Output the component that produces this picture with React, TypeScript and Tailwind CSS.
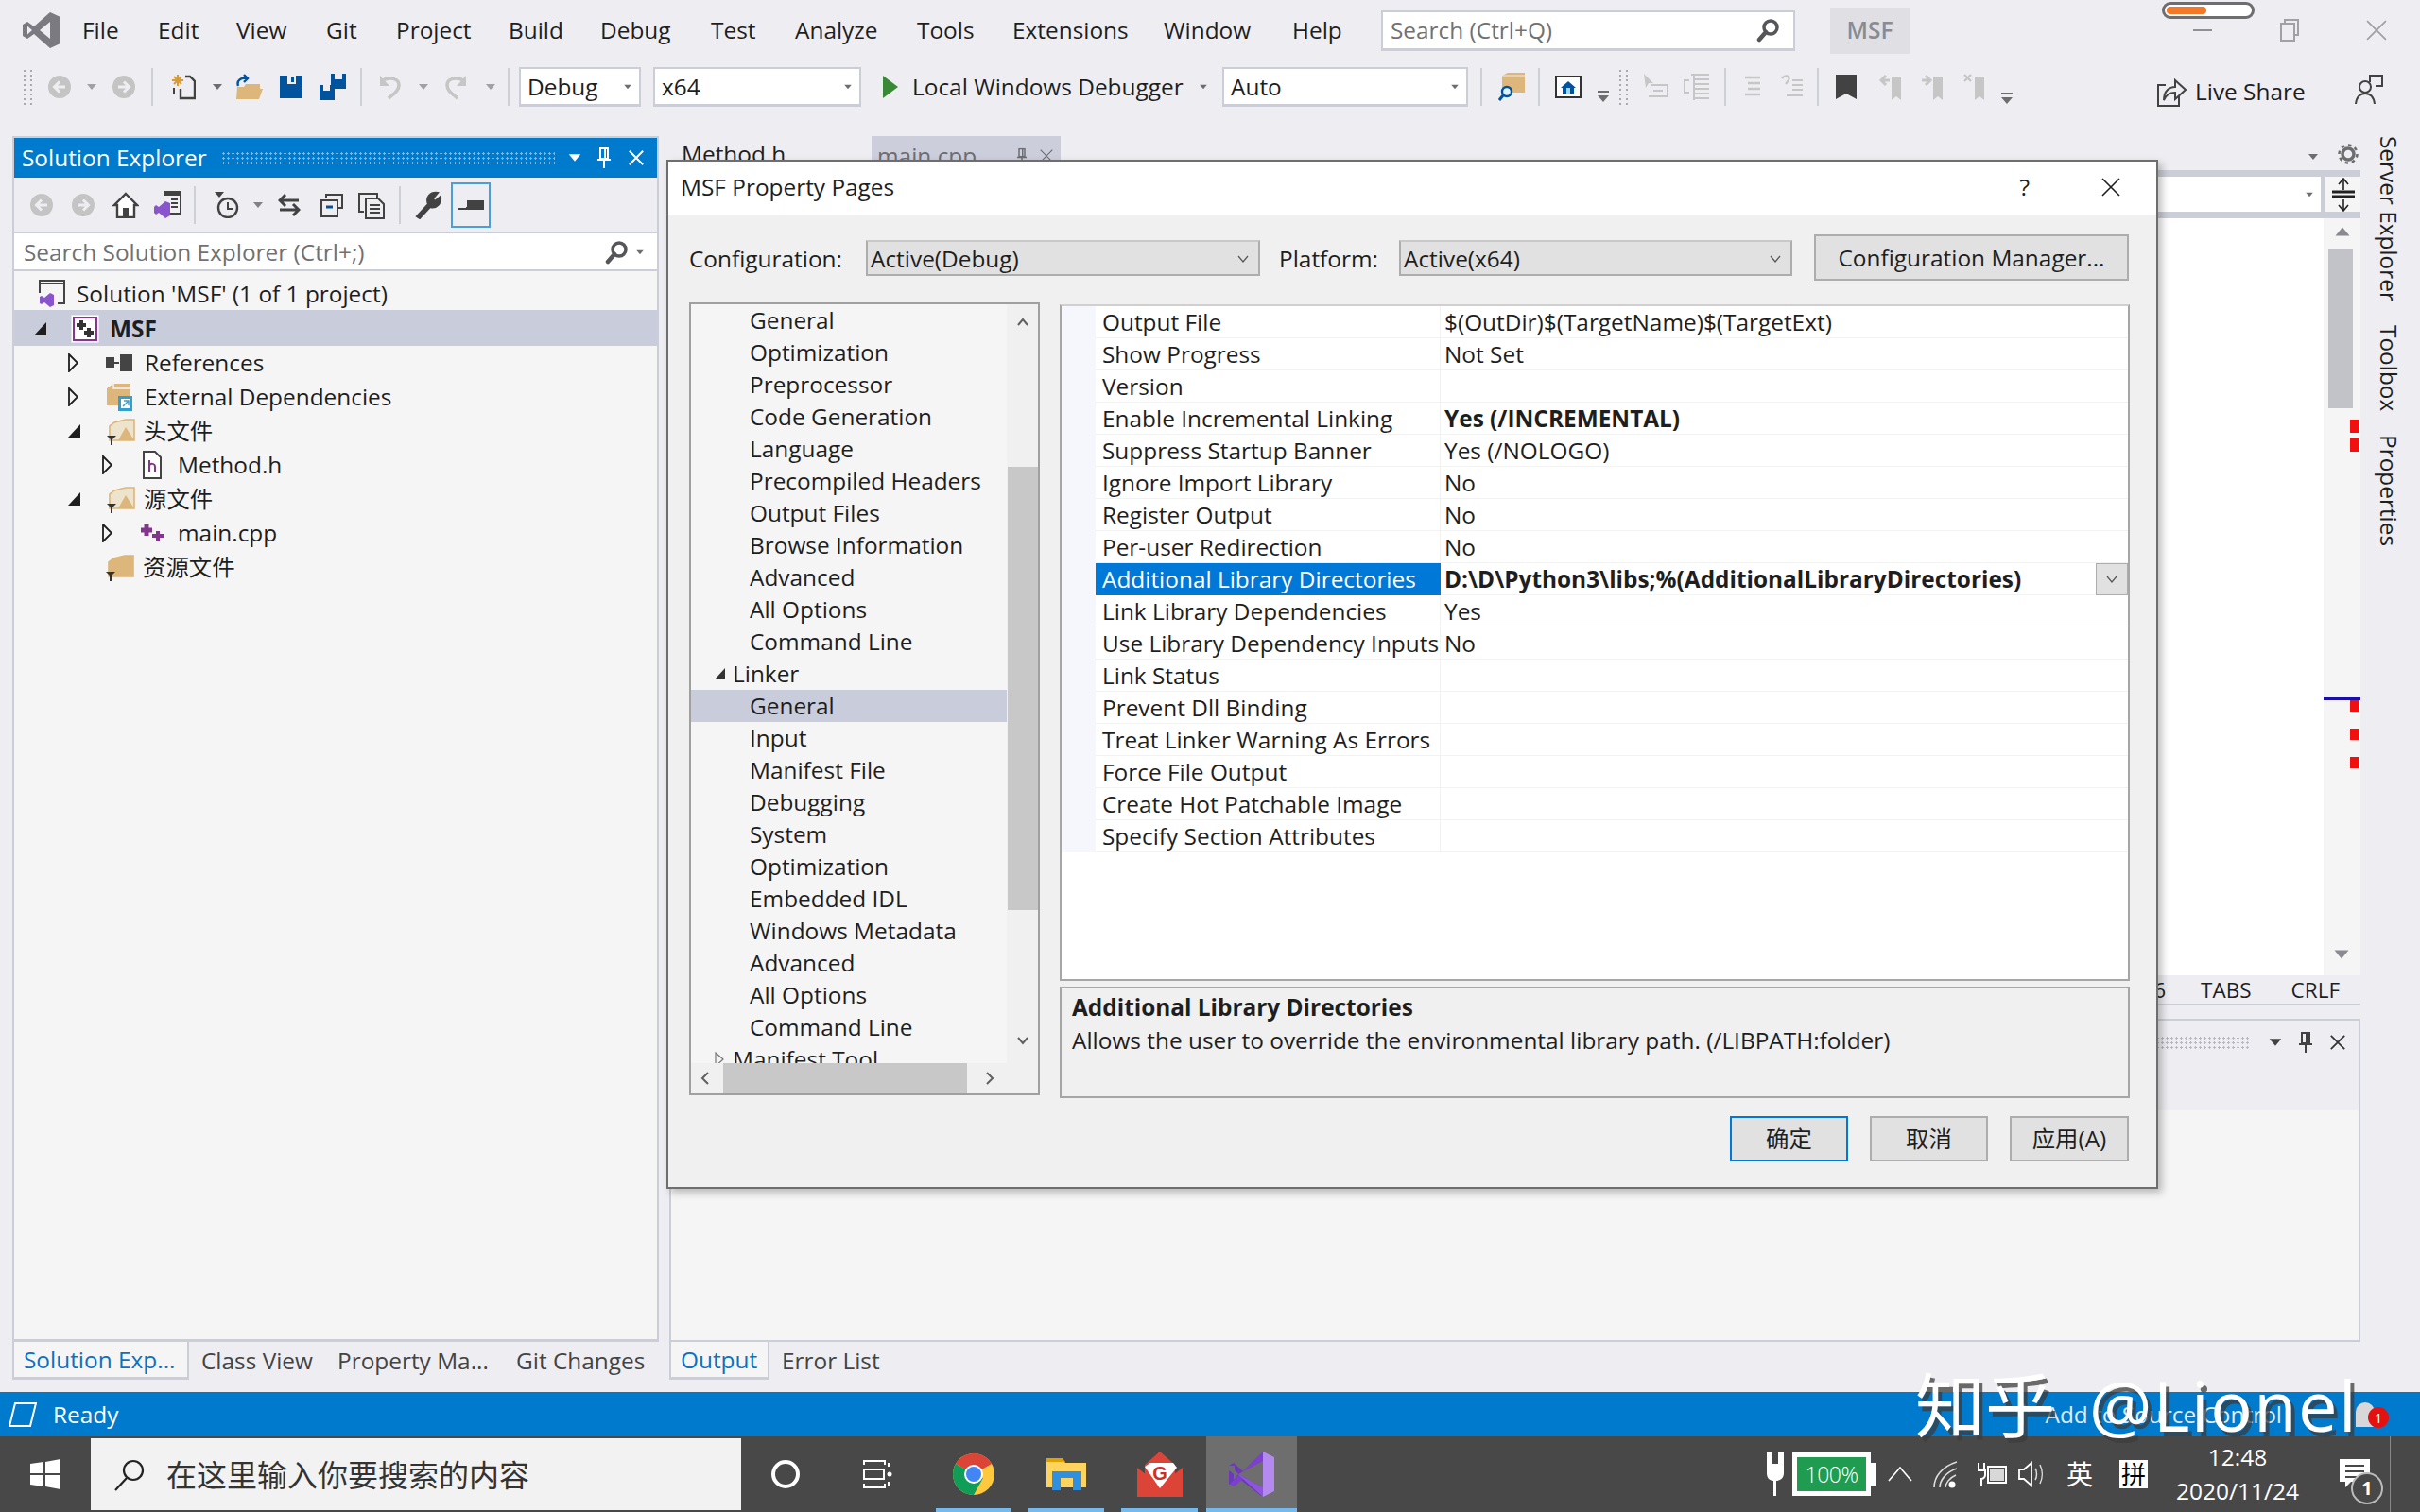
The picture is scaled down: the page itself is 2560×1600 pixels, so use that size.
import React from "react";

const ink = "#424242";
const blue = "#00539c";

function Drop({ c = "#717171", cls = "" }: { c?: string; cls?: string }) {
  return (
    <svg width="12" height="8" viewBox="0 0 12 8" className={cls}>
      <polygon points="1,1 11,1 6,7" fill={c} />
    </svg>
  );
}
function Sep({ cls = "" }: { cls?: string }) {
  return <div className={"h-[40px] w-[2px] bg-[#cfcfd6] " + cls} />;
}
function Grip({ cls = "" }: { cls?: string }) {
  return (
    <svg width="11" height="38" viewBox="0 0 11 38" className={cls}>
      {[1, 6, 11, 16, 21, 26, 31, 36].map((y) => (
        <g key={y} fill="#a9a9b0">
          <rect x="1" y={y} width="2" height="2" />
          <rect x="8" y={y} width="2" height="2" />
        </g>
      ))}
    </svg>
  );
}
function NavCircle({ right = false, cls = "" }: { right?: boolean; cls?: string }) {
  return (
    <svg width="24" height="24" viewBox="0 0 24 24" className={cls}>
      <circle cx="12" cy="12" r="12" fill="#c4c4c4" />
      <path
        d={right ? "M6 12H17M12 6.5L17.5 12L12 17.5" : "M18 12H7M12 6.5L6.5 12L12 17.5"}
        stroke="#eeeef2"
        strokeWidth="3"
        fill="none"
      />
    </svg>
  );
}
function VsLogo({ c = "#7a7a80", w = 42, h = 40 }: { c?: string; w?: number; h?: number }) {
  return (
    <svg width={w} height={h} viewBox="0 0 42 40">
      <path
        fillRule="evenodd"
        d="M30 1L41 6V34L30 39L13 24L6 29L1 26V14L6 11L13 16ZM30 11L19 20L30 29ZM6 15.5V24.5L11 20Z"
        fill={c}
      />
    </svg>
  );
}
function Magnifier({ c = "#424242", s = 26, cls = "" }: { c?: string; s?: number; cls?: string }) {
  return (
    <svg width={s} height={s} viewBox="0 0 26 26" className={cls}>
      <circle cx="16" cy="10" r="7" stroke={c} strokeWidth="3.5" fill="none" />
      <path d="M11 15L4 23" stroke={c} strokeWidth="4.5" strokeLinecap="round" />
    </svg>
  );
}
function Chev({ dir, cls = "" }: { dir: "up" | "down" | "left" | "right"; cls?: string }) {
  const d = {
    up: "M2 9L7 3L12 9",
    down: "M2 3L7 9L12 3",
    left: "M9 1L3 7L9 13",
    right: "M4 1L10 7L4 13",
  }[dir];
  return (
    <svg width="14" height="14" viewBox="0 0 14 14" className={cls}>
      <path d={d} stroke="#606060" strokeWidth="2" fill="none" />
    </svg>
  );
}
function ThinChev({ cls = "" }: { cls?: string }) {
  return (
    <svg width="12" height="8" viewBox="0 0 12 8" className={cls}>
      <path d="M1 1L6 7L11 1" stroke="#555" strokeWidth="1.2" fill="none" />
    </svg>
  );
}
function Cross({ c = "#1e1e1e", s = 20, w = 1.6, cls = "" }: { c?: string; s?: number; w?: number; cls?: string }) {
  return (
    <svg width={s} height={s} viewBox="0 0 20 20" className={cls}>
      <path d="M1 1L19 19M19 1L1 19" stroke={c} strokeWidth={w} />
    </svg>
  );
}
function Pin({ c = "#fff", cls = "" }: { c?: string; cls?: string }) {
  return (
    <svg width="14" height="22" viewBox="0 0 14 22" className={cls}>
      <path d="M3 1H11V12H3ZM8 2V11M0 13H14M7 13V22" stroke={c} strokeWidth="2" fill="none" />
    </svg>
  );
}

function NewIcon() {
  return (
    <svg width="26" height="28" viewBox="0 0 26 28" className="ml-[19px]">
      <path d="M7 1V13M1 7H13M3 3L11 11M11 3L3 11" stroke="#d89b33" strokeWidth="2" />
      <path d="M15 3H20L25 8V26H10V16" stroke={ink} strokeWidth="2.4" fill="none" />
      <path d="M3 15V22" stroke={ink} strokeWidth="2" />
    </svg>
  );
}
function OpenIcon() {
  return (
    <svg width="29" height="28" viewBox="0 0 29 28" className="ml-[13px]">
      <path d="M2 14H9L11 11H26V16H29L25 27H1Z" fill="#dcb67a" />
      <path d="M3 13C1 7 6 4 12 5M9 1L13 5L9 9" stroke={blue} strokeWidth="2.4" fill="none" />
    </svg>
  );
}
function SaveIcon() {
  return (
    <svg width="24" height="24" viewBox="0 0 24 24" className="ml-[18px]">
      <path d="M0 0H24V24H0Z" fill={blue} />
      <path d="M8 0H17V9H8Z" fill="#eeeef2" />
      <rect x="12" y="1" width="3" height="6" fill={blue} />
    </svg>
  );
}
function SaveAllIcon() {
  return (
    <svg width="28" height="28" viewBox="0 0 28 28" className="ml-[18px]">
      <path d="M12 0H28V16H12Z" fill={blue} />
      <rect x="16" y="0" width="8" height="6" fill="#eeeef2" />
      <path d="M0 12H16V28H0Z" fill={blue} />
      <rect x="4" y="12" width="7" height="6" fill="#eeeef2" />
    </svg>
  );
}
function Undo({ flip = false, cls = "" }: { flip?: boolean; cls?: string }) {
  return (
    <svg width="25" height="28" viewBox="0 0 25 28" className={cls + (flip ? " -scale-x-100" : "")}>
      <path d="M2 2V13H12Z" fill="#c6c6c6" />
      <path d="M5 7C12 3 22 5 22 12C22 18 17 21 11 26" stroke="#c6c6c6" strokeWidth="3.6" fill="none" />
    </svg>
  );
}
function FolderSearch() {
  return (
    <svg width="28" height="32" viewBox="0 0 28 32" className="ml-[17px]">
      <path d="M4 4L10 1H28V22H4Z" fill="#dcb67a" />
      <path d="M4 4H28" stroke="#eeeef2" strokeWidth="1" />
      <circle cx="9" cy="21" r="5" fill="#dff1fb" stroke={blue} strokeWidth="2.4" />
      <path d="M5 25L1 30" stroke={blue} strokeWidth="3" />
    </svg>
  );
}
function HomeBox() {
  return (
    <svg width="28" height="24" viewBox="0 0 28 24" className="ml-[16px]">
      <rect x="1" y="1" width="26" height="22" fill="#fff" stroke="#333" strokeWidth="2" />
      <path d="M14 6L22 13H20V19H8V13H6Z" fill={blue} />
      <rect x="12" y="13" width="4" height="6" fill="#9fd6f2" />
    </svg>
  );
}
function DropLines({ cls = "" }: { cls?: string }) {
  return (
    <svg width="12" height="12" viewBox="0 0 12 12" className={cls}>
      <rect x="0" y="0" width="12" height="2" fill="#6d6d70" />
      <polygon points="0,5 12,5 6,12" fill="#6d6d70" />
    </svg>
  );
}
function CursorList() {
  return (
    <svg width="27" height="28" viewBox="0 0 27 28" className="ml-[15px]">
      <path d="M1 0L11 10H6L3 15Z" fill="#c6c6c6" />
      <path d="M9 12H26V24H6" stroke="#c6c6c6" strokeWidth="2" fill="none" />
      <path d="M11 18H21" stroke="#c6c6c6" strokeWidth="2" />
    </svg>
  );
}
function TextLines() {
  return (
    <svg width="28" height="28" viewBox="0 0 28 28" className="ml-[16px]">
      <path d="M8 1H27M12 6H27M12 11H27M12 16H27M12 21H27M12 26H27M11 1V28M6 7H1V20H6" stroke="#c6c6c6" strokeWidth="2" fill="none" />
    </svg>
  );
}
function Indent1() {
  return (
    <svg width="20" height="24" viewBox="0 0 20 24" className="ml-[18px]">
      <path d="M2 2H18M5 8H18M5 14H18M2 20H18" stroke="#c6c6c6" strokeWidth="2.4" />
    </svg>
  );
}
function Indent2() {
  return (
    <svg width="23" height="26" viewBox="0 0 23 26" className="ml-[20px]">
      <path d="M1 4C5 -1 10 2 8 6L5 10M12 6H23M12 11H23M12 16H23M6 22H23" stroke="#c6c6c6" strokeWidth="2.2" fill="none" />
    </svg>
  );
}
function Bookmark() {
  return (
    <svg width="22" height="26" viewBox="0 0 22 26" className="ml-[18px]">
      <path d="M0 0H22V26L11 20L0 26Z" fill="#424242" />
    </svg>
  );
}
function BookmarkNav({ kind, cls = "" }: { kind: "prev" | "next" | "clear"; cls?: string }) {
  return (
    <svg width="24" height="28" viewBox="0 0 24 28" className={cls}>
      <path d="M13 3H23V28L18 24L13 28Z" fill="#c6c6c6" />
      {kind === "prev" && <path d="M11 7H4M7 2L2 7L7 12" stroke="#c6c6c6" strokeWidth="3" fill="none" />}
      {kind === "next" && <path d="M1 7H9M5 2L10 7L5 12" stroke="#c6c6c6" strokeWidth="3" fill="none" />}
      {kind === "clear" && <path d="M2 1L9 8M9 1L2 8" stroke="#c6c6c6" strokeWidth="2.4" />}
    </svg>
  );
}

function Combo({ cls, text, arrowCls }: { cls: string; text: string; arrowCls?: string }) {
  return (
    <div className={"flex h-[42px] items-center justify-between border-2 border-b-[3px] border-[#ccced7] bg-white " + cls}>
      <span>{text}</span>
      <Drop c="#6d6d70" cls={arrowCls ?? "mr-[6px] scale-75"} />
    </div>
  );
}

function MenuBar() {
  const items: [string, string][] = [
    ["File", "w-[79px]"],
    ["Edit", "w-[83px]"],
    ["View", "w-[95px]"],
    ["Git", "w-[74px]"],
    ["Project", "w-[119px]"],
    ["Build", "w-[97px]"],
    ["Debug", "w-[117px]"],
    ["Test", "w-[89px]"],
    ["Analyze", "w-[129px]"],
    ["Tools", "w-[101px]"],
    ["Extensions", "w-[160px]"],
    ["Window", "w-[136px]"],
    ["Help", "w-[94px]"],
  ];
  return (
    <div className="flex h-[64px] shrink-0 items-center pl-[23px]">
      <div className="mr-[22px] flex">
        <VsLogo />
      </div>
      {items.map(([t, w], i) => (
        <span key={t} className={i === 0 ? "w-[80px]" : w}>
          {t}
        </span>
      ))}
      <div className="flex h-[43px] w-[438px] items-center justify-between border-2 border-b-[3px] border-[#ccced7] bg-white pl-[8px] pr-[14px] text-[#717171]">
        <span>Search (Ctrl+Q)</span>
        <Magnifier c="#55555a" />
      </div>
      <div className="ml-[37px] flex h-[49px] w-[84px] items-center justify-center bg-[#dfdfe4] font-semibold text-[#8b8b8f]">MSF</div>
      <div className="ml-[300px] h-[2px] w-[20px] bg-[#8f8f94]" />
      <svg width="20" height="24" viewBox="0 0 20 24" className="ml-[72px]">
        <path d="M5 5V1H19V17H15M1 5H15V23H1Z" stroke="#a0a0a5" strokeWidth="2" fill="none" />
      </svg>
      <Cross c="#a0a0a5" s={22} cls="ml-[71px]" />
    </div>
  );
}

function ToolBar() {
  return (
    <div className="flex h-[54px] shrink-0 items-center pl-[24px] pt-[2px]">
      <Grip />
      <NavCircle cls="ml-[16px]" />
      <Drop c="#a0a0a5" cls="ml-[16px]" />
      <NavCircle right cls="ml-[16px]" />
      <Sep cls="ml-[17px]" />
      <NewIcon />
      <Drop c="#6d6d70" cls="ml-[17px]" />
      <OpenIcon />
      <SaveIcon />
      <SaveAllIcon />
      <Sep cls="ml-[15px]" />
      <Undo cls="ml-[17px]" />
      <Drop c="#a0a0a5" cls="ml-[17px]" />
      <Undo flip cls="ml-[16px]" />
      <Drop c="#a0a0a5" cls="ml-[18px]" />
      <Sep cls="ml-[12px]" />
      <Combo cls="ml-[10px] w-[129px] pl-[7px]" text="Debug" />
      <Combo cls="ml-[13px] w-[220px] pl-[7px]" text="x64" />
      <svg width="18" height="26" viewBox="0 0 18 26" className="ml-[22px]">
        <polygon points="1,1 17,13 1,25" fill="#388a34" />
      </svg>
      <span className="ml-[14px] w-[292px] whitespace-nowrap">Local Windows Debugger</span>
      <Drop c="#6d6d70" cls="ml-[10px] scale-75" />
      <Combo cls="ml-[14px] w-[260px] pl-[7px]" text="Auto" />
      <Sep cls="ml-[13px]" />
      <FolderSearch />
      <Sep cls="ml-[14px]" />
      <HomeBox />
      <DropLines cls="ml-[17px] mt-[20px]" />
      <Grip cls="ml-[10px]" />
      <CursorList />
      <TextLines />
      <Sep cls="ml-[15px]" />
      <Indent1 />
      <Indent2 />
      <Sep cls="ml-[15px]" />
      <Bookmark />
      <BookmarkNav kind="prev" cls="ml-[24px]" />
      <BookmarkNav kind="next" cls="ml-[20px]" />
      <BookmarkNav kind="clear" cls="ml-[20px]" />
      <DropLines cls="ml-[17px] mt-[24px]" />
      <svg width="32" height="34" viewBox="0 0 32 34" className="ml-[152px] mt-[10px]">
        <path d="M10 10H2V32H24V22" stroke={ink} strokeWidth="2" fill="none" />
        <path d="M8 26C8 16 14 12 20 12V5L31 15L20 25V18C14 18 11 20 8 26Z" stroke={ink} strokeWidth="2" fill="none" />
      </svg>
      <span className="ml-[9px] mt-[10px] w-[120px] whitespace-nowrap">Live Share</span>
      <svg width="30" height="32" viewBox="0 0 30 32" className="ml-[49px] mt-[6px]">
        <circle cx="11" cy="13" r="6" stroke={ink} strokeWidth="2" fill="none" />
        <path d="M1 31C2 23 6 20 11 20C16 20 20 23 21 31M16 8V1H29V12H22" stroke={ink} strokeWidth="2" fill="none" />
      </svg>
    </div>
  );
}

function SolutionToolbar() {
  return (
    <div className="flex h-[57px] shrink-0 items-center pl-[17px]">
      <NavCircle />
      <NavCircle right cls="ml-[20px]" />
      <svg width="28" height="28" viewBox="0 0 28 28" className="ml-[19px]">
        <path d="M14 2L26 14H23V27H5V14H2Z" stroke={ink} strokeWidth="2.4" fill="#fff" />
        <rect x="11" y="17" width="6" height="10" fill={ink} />
      </svg>
      <svg width="30" height="30" viewBox="0 0 30 30" className="ml-[15px]">
        <path d="M11 1H29V24H17" fill="#f0f0f4" stroke={ink} strokeWidth="2" />
        <rect x="11" y="1" width="18" height="4" fill={ink} />
        <path d="M19 9H26M19 13H26M19 17H26" stroke={ink} strokeWidth="2" />
        <path d="M13 11L18 13V26L13 29L6 23L3 25L1 23V17L3 15L6 17Z" fill="#8a55cc" />
      </svg>
      <Sep cls="ml-[13px] h-[38px]" />
      <svg width="26" height="28" viewBox="0 0 26 28" className="ml-[20px]">
        <polygon points="0,0 10,0 5,6" fill={ink} />
        <circle cx="14" cy="17" r="10" stroke={ink} strokeWidth="2.4" fill="none" />
        <path d="M14 11V18H20" stroke={ink} strokeWidth="2" fill="none" />
      </svg>
      <Drop c="#818186" cls="ml-[14px]" />
      <svg width="24" height="26" viewBox="0 0 24 26" className="ml-[15px]">
        <path d="M2 8H22M8 2L2 8L8 14M22 18H2M16 12L22 18L16 24" stroke={ink} strokeWidth="3" fill="none" />
      </svg>
      <svg width="24" height="26" viewBox="0 0 24 26" className="ml-[21px]">
        <path d="M6 6V2H23V16H19" stroke={ink} strokeWidth="2" fill="none" />
        <rect x="1" y="8" width="17" height="17" fill="#eeeef2" stroke={ink} strokeWidth="2" />
        <path d="M6 15H13" stroke={blue} strokeWidth="3" />
      </svg>
      <svg width="28" height="30" viewBox="0 0 28 30" className="ml-[16px]">
        <path d="M6 22H1V3H20V7" stroke={ink} strokeWidth="2" fill="none" />
        <path d="M8 8H21L27 14V29H8Z" fill="#eeeef2" stroke={ink} strokeWidth="2" />
        <path d="M12 15H23M12 19H23M12 23H23" stroke={ink} strokeWidth="2" />
      </svg>
      <Sep cls="ml-[15px] h-[38px]" />
      <svg width="30" height="30" viewBox="0 0 30 30" className="ml-[14px]">
        <path d="M3 27L15 14C12 7 17 1 25 2L20 8L22 11L28 6C29 14 23 19 17 17L6 29Z" fill={ink} stroke={ink} strokeWidth="2" />
      </svg>
      <div className="ml-[9px] flex h-[48px] w-[42px] items-center justify-center border-2 border-[#4a9fd8]">
        <svg width="28" height="10" viewBox="0 0 28 10">
          <path d="M0 8H9V7H10V0H28V10H0Z" fill={ink} />
        </svg>
      </div>
    </div>
  );
}

function TreeRow({
  cls,
  arrow,
  arrowCls,
  icon,
  text,
  textCls,
}: {
  cls?: string;
  arrow?: "open" | "closed";
  arrowCls?: string;
  icon?: React.ReactNode;
  text: string;
  textCls: string;
}) {
  return (
    <div className={"flex h-[36px] shrink-0 items-center " + (cls ?? "")}>
      {arrow === "open" && (
        <svg width="14" height="14" viewBox="0 0 14 14" className={arrowCls}>
          <polygon points="13,0 13,14 0,14" fill="#1e1e1e" />
        </svg>
      )}
      {arrow === "closed" && (
        <svg width="11" height="20" viewBox="0 0 11 20" className={arrowCls}>
          <polygon points="1,1 10,10 1,19" fill="none" stroke="#1e1e1e" strokeWidth="1.8" />
        </svg>
      )}
      {icon}
      <span className={textCls}>{text}</span>
    </div>
  );
}

const FilterFolder = ({ solid = false }: { solid?: boolean }) => (
  <svg width="30" height="30" viewBox="0 0 30 30">
    <path d="M8 6L20 3H29V25H3V10Z" fill={solid ? "#dcb67a" : "#eee3cd"} stroke="#dcb67a" strokeWidth="1.6" />
    {!solid && <path d="M12 25L20 11L29 25Z" fill="#dcb67a" />}
    <polygon points="0,20 10,20 5,25" fill="#333" />
    <rect x="4" y="24" width="2" height="6" fill="#333" />
  </svg>
);

function SolutionPanel() {
  return (
    <div className="flex w-[684px] shrink-0 flex-col border-2 border-b-[3px] border-[#ccced7] bg-[#eeeef2]">
      <div className="flex h-[42px] shrink-0 items-center bg-[#007acc] pl-[8px] pr-[14px] text-white">
        <span>Solution Explorer</span>
        <div className="mx-[15px] h-[14px] flex-1 bg-[radial-gradient(#7ab8e4_1px,transparent_1.2px)] bg-[length:5px_5px]" />
        <Drop c="#fff" cls="scale-125" />
        <Pin cls="ml-[18px]" />
        <Cross c="#fff" s={16} w={2.4} cls="ml-[19px]" />
      </div>
      <SolutionToolbar />
      <div className="flex h-[42px] shrink-0 items-center justify-between border-2 border-l-0 border-r-0 border-[#ccced7] bg-white pl-[10px] pr-[12px] pt-[2px] text-[#717171]">
        <span>Search Solution Explorer (Ctrl+;)</span>
        <div className="flex items-center">
          <Magnifier c="#55555a" />
          <Drop c="#6d6d70" cls="ml-[6px] scale-75" />
        </div>
      </div>
      <div className="flex flex-1 flex-col bg-[#f5f5f5] pt-[5px]">
        <TreeRow
          cls="h-[35px] pl-[26px] pt-[2px]"
          icon={
            <svg width="28" height="30" viewBox="0 0 28 30" className="mr-[12px]">
              <path d="M1 14V1H27V4M1 4H27M27 4V25H20" stroke="#444" strokeWidth="2" fill="none" />
              <path d="M12 14L16 16V27L12 29L6 24L3 26L1 25V18L3 17L6 19Z" fill="#8a55cc" />
            </svg>
          }
          text="Solution 'MSF' (1 of 1 project)"
          textCls=""
        />
        <TreeRow
          cls="h-[38px] bg-[#c9ccdb] pl-[21px] pt-[2px]"
          arrow="open"
          arrowCls="mr-[25px]"
          icon={
            <svg width="30" height="30" viewBox="0 0 30 30" className="mr-[11px]">
              <rect x="1" y="1" width="28" height="28" fill="#fff" stroke="#fff" />
              <rect x="3" y="3" width="24" height="24" fill="#fff" stroke="#84358d" strokeWidth="2" />
              <path d="M11 6V16M6 11H16" stroke="#333" strokeWidth="4" />
              <path d="M19 14V24M14 19H24" stroke="#333" strokeWidth="4" />
            </svg>
          }
          text="MSF"
          textCls="font-bold"
        />
        <TreeRow
          cls="pl-[57px]"
          arrow="closed"
          arrowCls="mr-[29px]"
          icon={
            <svg width="28" height="18" viewBox="0 0 28 18" className="mr-[13px]">
              <rect x="0" y="3" width="9" height="11" fill="#444" />
              <rect x="9" y="8" width="5" height="2" fill="#444" />
              <rect x="15" y="0" width="13" height="18" fill="#444" />
            </svg>
          }
          text="References"
          textCls=""
        />
        <TreeRow
          cls="pl-[57px]"
          arrow="closed"
          arrowCls="mr-[29px]"
          icon={
            <svg width="28" height="30" viewBox="0 0 28 30" className="mr-[13px]">
              <path d="M1 6L8 1H26V24H1Z" fill="#dcb67a" />
              <path d="M8 1V6H26" stroke="#f5f5f5" strokeWidth="1.5" fill="none" />
              <rect x="13" y="14" width="15" height="16" fill="#2fa0d0" />
              <rect x="16" y="17" width="9" height="10" fill="#fff" />
              <path d="M18 25L23 20M19 19H24V24" stroke="#2fa0d0" strokeWidth="1.4" fill="none" />
            </svg>
          }
          text="External Dependencies"
          textCls=""
        />
        <TreeRow cls="pl-[57px]" arrow="open" arrowCls="mr-[27px]" icon={<div className="mr-[9px] flex"><FilterFolder /></div>} text="头文件" textCls="" />
        <TreeRow
          cls="pl-[93px]"
          arrow="closed"
          arrowCls="mr-[32px]"
          icon={
            <svg width="20" height="30" viewBox="0 0 20 30" className="mr-[17px]">
              <path d="M1 1H13L19 7V29H1Z" fill="#fff" stroke="#444" strokeWidth="2" />
              <path d="M7 10V22M7 16C8 13 13 13 13 17V22" stroke="#84358d" strokeWidth="2" fill="none" />
            </svg>
          }
          text="Method.h"
          textCls=""
        />
        <TreeRow cls="pl-[57px]" arrow="open" arrowCls="mr-[27px]" icon={<div className="mr-[9px] flex"><FilterFolder /></div>} text="源文件" textCls="" />
        <TreeRow
          cls="pl-[93px]"
          arrow="closed"
          arrowCls="mr-[30px]"
          icon={
            <svg width="24" height="20" viewBox="0 0 24 20" className="mr-[15px]">
              <path d="M6 1V13M0 7H12" stroke="#84358d" strokeWidth="5" />
              <path d="M18 8V19M12 13H24" stroke="#84358d" strokeWidth="4" />
            </svg>
          }
          text="main.cpp"
          textCls=""
        />
        <TreeRow cls="pl-[97px]" icon={<div className="mr-[9px] flex"><FilterFolder solid /></div>} text="资源文件" textCls="" />
      </div>
    </div>
  );
}

function DocPanel() {
  return (
    <div className="flex h-[920px] shrink-0 flex-col">
      <div className="flex h-[36px] shrink-0 items-start">
        <span className="ml-[13px] mt-[4px] w-[201px] whitespace-nowrap">Method.h</span>
        <div className="flex h-[36px] w-[200px] items-center justify-between bg-[#cccedb] pl-[6px] pr-[8px] pt-[6px] text-[#6d6d70]">
          <span>main.cpp</span>
          <div className="flex items-center gap-[12px]">
            <Pin c="#6d6d70" cls="scale-75" />
            <Cross c="#6d6d70" s={14} />
          </div>
        </div>
        <div className="flex-1" />
        <Drop c="#6d6d70" cls="mt-[18px]" />
        <svg width="22" height="22" viewBox="0 0 22 22" className="ml-[20px] mr-[2px] mt-[8px]">
          <circle cx="11" cy="11" r="6" fill="none" stroke="#6d6d70" strokeWidth="3.5" />
          <circle cx="11" cy="11" r="9.5" fill="none" stroke="#6d6d70" strokeWidth="2.5" strokeDasharray="3.5 3.9" />
        </svg>
      </div>
      <div className="flex h-[51px] shrink-0 items-stretch border-y-[7px] border-y-[#ccced7] bg-[#ccced7]">
        <div className="flex flex-1 items-center justify-end bg-white pr-[6px]">
          <Drop c="#6d6d70" cls="scale-75" />
        </div>
        <div className="ml-[5px] flex w-[37px] items-center justify-center bg-[#f5f5f5]">
          <svg width="24" height="36" viewBox="0 0 24 36">
            <path d="M12 1V13M12 23V35M7 7L12 1L17 7M7 29L12 35L17 29" stroke="#222" strokeWidth="1.6" fill="none" />
            <path d="M0 15H24M0 20H24" stroke="#222" strokeWidth="3" />
          </svg>
        </div>
      </div>
      <div className="flex min-h-0 flex-1">
        <div className="flex-1 bg-white" />
        <div className="relative flex w-[39px] flex-col items-center bg-[#f5f5f5] pt-[10px]">
          <Drop c="#8a8a90" cls="rotate-180 scale-150" />
          <div className="mr-[4px] mt-[15px] h-[168px] w-[26px] bg-[#c2c3c9]" />
          <div className="absolute right-[1px] top-[213px] h-[14px] w-[10px] bg-[#f01010]" />
          <div className="absolute right-[1px] top-[233px] h-[14px] w-[10px] bg-[#f01010]" />
          <div className="absolute left-0 right-0 top-[507px] h-[3px] bg-[#1a10a8]" />
          <div className="absolute right-[1px] top-[510px] h-[12px] w-[10px] bg-[#f01010]" />
          <div className="absolute right-[1px] top-[540px] h-[12px] w-[10px] bg-[#f01010]" />
          <div className="absolute right-[1px] top-[570px] h-[12px] w-[10px] bg-[#f01010]" />
          <Drop c="#8a8a90" cls="absolute bottom-[18px] left-[13px] scale-150" />
        </div>
      </div>
      <div className="flex h-[32px] shrink-0 items-center justify-end border-b-2 border-[#ccced7] pt-[2px] text-[22.5px]">
        <span className="mr-[37px]">Ch: 6</span>
        <span className="mr-[42px]">TABS</span>
        <span className="mr-[22px]">CRLF</span>
      </div>
    </div>
  );
}

function OutputPanel() {
  return (
    <div className="mt-[14px] flex min-h-0 flex-1 flex-col border-2 border-[#ccced7]">
      <div className="flex h-[46px] shrink-0 items-center justify-end pr-[14px]">
        <div className="mr-[22px] h-[14px] flex-1 bg-[radial-gradient(#b8b8c0_1px,transparent_1.2px)] bg-[length:5px_5px]" />
        <Drop c="#424242" cls="scale-125" />
        <Pin c="#424242" cls="ml-[19px]" />
        <Cross c="#333" s={16} w={2.2} cls="ml-[19px]" />
      </div>
      <div className="h-[49px] shrink-0" />
      <div className="flex-1 bg-[#f5f5f5]" />
    </div>
  );
}

function BottomTabs({ items }: { items: [string, string, boolean][] }) {
  return (
    <div className="flex h-[40px] shrink-0 items-center">
      {items.map(([t, c, active]) => (
        <div
          key={t}
          className={
            active
              ? "flex h-[40px] items-center whitespace-nowrap border-x-2 border-b-[3px] border-[#ccced7] border-t-0 bg-[#f5f5f5] text-[#0e70c0] " + c
              : "flex h-[40px] items-center whitespace-nowrap text-[#444] " + c
          }
        >
          {t}
        </div>
      ))}
    </div>
  );
}

const leftRows: [string, number][] = [
  ["General", 1],
  ["Optimization", 1],
  ["Preprocessor", 1],
  ["Code Generation", 1],
  ["Language", 1],
  ["Precompiled Headers", 1],
  ["Output Files", 1],
  ["Browse Information", 1],
  ["Advanced", 1],
  ["All Options", 1],
  ["Command Line", 1],
  ["Linker", 0],
  ["General", 2],
  ["Input", 1],
  ["Manifest File", 1],
  ["Debugging", 1],
  ["System", 1],
  ["Optimization", 1],
  ["Embedded IDL", 1],
  ["Windows Metadata", 1],
  ["Advanced", 1],
  ["All Options", 1],
  ["Command Line", 1],
  ["Manifest Tool", 3],
];

function PropTree() {
  return (
    <div className="flex h-[839px] w-[371px] shrink-0 flex-col border-2 border-[#a0a0a0] bg-[#f0f0f0]">
      <div className="flex h-[803px] shrink-0">
        <div className="w-[334px] shrink-0 overflow-hidden bg-[#f5f5f5]">
          {leftRows.map(([t, k], i) => {
            if (k === 0 || k === 3) {
              return (
                <div key={i} className="flex h-[34px] items-center pl-[25px]">
                  {k === 0 ? (
                    <svg width="12" height="12" viewBox="0 0 12 12" className="mr-[7px]">
                      <polygon points="11,0 11,12 0,12" fill="#333" />
                    </svg>
                  ) : (
                    <svg width="10" height="16" viewBox="0 0 10 16" className="mr-[9px]">
                      <polygon points="1,1 9,8 1,15" fill="none" stroke="#777" strokeWidth="1.2" />
                    </svg>
                  )}
                  {t}
                </div>
              );
            }
            return (
              <div key={i} className={k === 2 ? "flex h-[34px] items-center bg-[#c9ccdb] pl-[62px]" : "flex h-[34px] items-center pl-[62px]"}>
                {t}
              </div>
            );
          })}
        </div>
        <div className="flex w-[33px] flex-col items-center">
          <Chev dir="up" cls="mt-[13px]" />
          <div className="mt-[145px] h-[469px] w-[32px] bg-[#c8c8c8]" />
          <Chev dir="down" cls="mt-[132px]" />
        </div>
      </div>
      <div className="flex h-[32px] items-center">
        <Chev dir="left" cls="ml-[9px]" />
        <div className="ml-[11px] h-[32px] w-[258px] bg-[#c8c8c8]" />
        <Chev dir="right" cls="ml-[17px]" />
      </div>
    </div>
  );
}

const propRows: { l: string; v?: string; b?: boolean; sel?: boolean }[] = [
  { l: "Output File", v: "$(OutDir)$(TargetName)$(TargetExt)" },
  { l: "Show Progress", v: "Not Set" },
  { l: "Version" },
  { l: "Enable Incremental Linking", v: "Yes (/INCREMENTAL)", b: true },
  { l: "Suppress Startup Banner", v: "Yes (/NOLOGO)" },
  { l: "Ignore Import Library", v: "No" },
  { l: "Register Output", v: "No" },
  { l: "Per-user Redirection", v: "No" },
  { l: "Additional Library Directories", v: "D:\\D\\Python3\\libs;%(AdditionalLibraryDirectories)", b: true, sel: true },
  { l: "Link Library Dependencies", v: "Yes" },
  { l: "Use Library Dependency Inputs", v: "No" },
  { l: "Link Status" },
  { l: "Prevent Dll Binding" },
  { l: "Treat Linker Warning As Errors" },
  { l: "Force File Output" },
  { l: "Create Hot Patchable Image" },
  { l: "Specify Section Attributes" },
];

function PropGrid() {
  return (
    <div className="h-[716px] shrink-0 border-2 border-[#a6a6a6] border-t-[#d0d0d0] bg-white">
      {propRows.map((r) => (
        <div key={r.l} className="flex h-[34px] items-stretch">
          <div className="w-[36px] shrink-0 bg-[#f5f7fc]" />
          <div
            className={
              r.sel
                ? "flex w-[365px] shrink-0 items-center overflow-hidden whitespace-nowrap bg-[#0078d7] pl-[7px] text-white"
                : "flex w-[365px] shrink-0 items-center overflow-hidden whitespace-nowrap border-b border-r border-[#f2f2f2] pl-[7px]"
            }
          >
            {r.l}
          </div>
          <div className={r.b ? "flex flex-1 items-center whitespace-nowrap border-b border-[#f2f2f2] pl-[4px] font-bold" : "flex flex-1 items-center whitespace-nowrap border-b border-[#f2f2f2] pl-[4px]"}>
            {r.v}
          </div>
          {r.sel && (
            <div className="flex w-[34px] items-center justify-center border border-[#adadad] bg-[#e1e1e1]">
              <ThinChev />
            </div>
          )}
        </div>
      ))}
    </div>
  );
}

function Dialog() {
  return (
    <div className="absolute left-[705px] top-[169px] flex h-[1089px] w-[1578px] flex-col border-2 border-[#6e6e6e] bg-white shadow-[4px_4px_8px_rgba(0,0,0,0.25)]">
      <div className="flex h-[56px] shrink-0 items-center pb-[2px] pl-[13px]">
        <span className="flex-1">MSF Property Pages</span>
        <span className="mr-[76px]">?</span>
        <Cross s={20} cls="mr-[38px]" />
      </div>
      <div className="flex flex-1 flex-col bg-[#f0f0f0] pl-[22px] pr-[29px] pt-[21px]">
        <div className="flex h-[49px] shrink-0 items-center">
          <span className="w-[187px] whitespace-nowrap pt-[2px]">Configuration:</span>
          <div className="flex h-[38px] w-[417px] items-center justify-between border-2 border-[#adadad] border-t-[#c8c8c8] bg-[#e1e1e1] pl-[3px] pr-[10px] pt-[3px]">
            <span>Active(Debug)</span>
            <ThinChev />
          </div>
          <span className="ml-[20px] w-[127px] pt-[2px]">Platform:</span>
          <div className="flex h-[38px] w-[416px] items-center justify-between border-2 border-[#adadad] border-t-[#c8c8c8] bg-[#e1e1e1] pl-[3px] pr-[10px] pt-[3px]">
            <span>Active(x64)</span>
            <ThinChev />
          </div>
          <div className="ml-[23px] flex h-[49px] w-[333px] items-center justify-center whitespace-nowrap border-2 border-[#adadad] bg-[#e1e1e1]">Configuration Manager...</div>
        </div>
        <div className="mt-[23px] flex gap-[21px]">
          <PropTree />
          <div className="-mr-[1px] flex flex-1 flex-col pt-[2px]">
            <PropGrid />
            <div className="mt-[6px] h-[118px] border-2 border-[#a6a6a6] pl-[11px] pt-[5px]">
              <div className="h-[35px] font-bold">Additional Library Directories</div>
              <div>Allows the user to override the environmental library path. (/LIBPATH:folder)</div>
            </div>
          </div>
        </div>
        <div className="mt-[19px] flex justify-end gap-[23px]">
          <div className="flex h-[48px] w-[125px] items-center justify-center border-2 border-[#0078d7] bg-[#e1e1e1]">确定</div>
          <div className="flex h-[48px] w-[125px] items-center justify-center border-2 border-[#adadad] bg-[#e1e1e1]">取消</div>
          <div className="flex h-[48px] w-[126px] items-center justify-center border-2 border-[#adadad] bg-[#e1e1e1]">应用(A)</div>
        </div>
      </div>
    </div>
  );
}

function RightRail() {
  return (
    <div className="flex w-[63px] shrink-0 items-center pr-[3px] [writing-mode:vertical-rl]">
      <span className="mb-[25px] whitespace-nowrap">Server Explorer</span>
      <span className="mb-[25px] whitespace-nowrap">Toolbox</span>
      <span className="whitespace-nowrap">Properties</span>
    </div>
  );
}

function StatusBar() {
  return (
    <div className="flex h-[47px] shrink-0 items-center bg-[#007acc] pl-[9px] text-white">
      <svg width="30" height="28" viewBox="0 0 30 28">
        <path d="M7 2H29L23 26H1Z" fill="none" stroke="#fff" strokeWidth="2" />
      </svg>
      <span className="ml-[17px]">Ready</span>
      <div className="flex-1" />
      <svg width="18" height="26" viewBox="0 0 18 26">
        <path d="M9 25V3M2 10L9 2L16 10" stroke="#dcecf8" strokeWidth="2" fill="none" />
      </svg>
      <span className="ml-[15px] text-[#dcecf8]">Add to Source Control</span>
      <div className="relative ml-[78px] mr-[48px] h-[26px] w-[20px] rounded-t-full bg-[#d8d8d8]">
        <div className="absolute -right-[15px] top-[5px] flex h-[22px] w-[22px] items-center justify-center rounded-full bg-[#e51010] text-[15px] text-white">1</div>
      </div>
    </div>
  );
}

function ChromeIcon() {
  return (
    <svg width="44" height="44" viewBox="0 0 44 44">
      <circle cx="22" cy="22" r="22" fill="#ffc83d" />
      <path d="M22 22L3 11A22 22 0 0 1 41 11Z" fill="#db4437" />
      <path d="M22 22L3 11A22 22 0 0 0 22 44L32 26Z" fill="#0f9d58" />
      <circle cx="22" cy="22" r="10" fill="#fff" />
      <circle cx="22" cy="22" r="8" fill="#4285f4" />
    </svg>
  );
}
function FolderIcon() {
  return (
    <svg width="44" height="36" viewBox="0 0 44 36">
      <path d="M1 2H18L21 6H43V32H1Z" fill="#ffd45e" />
      <path d="M1 1H18L21 5H1Z" fill="#e0a200" />
      <path d="M7 35V15H38V35H29V22H16V35Z" fill="#2f8fe0" />
    </svg>
  );
}
function MailIcon() {
  return (
    <svg width="48" height="48" viewBox="0 0 48 48">
      <path d="M24 0L40 14V48H8V14Z" fill="#db4437" />
      <path d="M0 17L24 36L48 17V48H0Z" fill="#db4437" />
      <path d="M8 16L14 12H38L42 17L24 39Z" fill="#fff" />
      <path d="M0 16L8 12M48 16L40 12" stroke="#484848" strokeWidth="2" />
      <text x="24" y="30" textAnchor="middle" fontSize="20" fontWeight="800" fill="#c9302c" fontFamily="Liberation Sans, sans-serif">G</text>
    </svg>
  );
}
function VsColor() {
  return (
    <svg width="48" height="48" viewBox="0 0 48 48">
      <path d="M0 15L5 12L34 38V47L0 20Z M0 15V35L6 33V15Z" fill="#6a3ab8" />
      <path d="M1 34L36 0V10L8 35L5 37Z" fill="#7c3fd0" />
      <path d="M36 0L48 6V42L36 48Z" fill="#b48af0" />
      <path d="M10 24L36 10V38Z" fill="#6e6e6e" />
      <path d="M5 18V30L10 24Z" fill="#6e6e6e" />
      <path d="M10 24L36 38L36 48L5 20Z" fill="#8c55dc" />
    </svg>
  );
}

function TaskApp({ children, bg = "" }: { children: React.ReactNode; bg?: string }) {
  return (
    <div className={"relative flex h-full items-center justify-center " + bg}>
      {children}
      <div className="absolute bottom-0 left-[9px] right-[9px] h-[4px] bg-[#76b9ed]" />
    </div>
  );
}

function Taskbar() {
  return (
    <div className="flex h-[80px] shrink-0 items-stretch bg-[#484848] text-white">
      <div className="flex w-[96px] shrink-0 items-center justify-center">
        <svg width="32" height="32" viewBox="0 0 32 32">
          <path d="M0 5L14 3V15H0ZM16 3L32 0V15H16ZM0 17H14V29L0 27ZM16 17H32V32L16 29Z" fill="#fff" />
        </svg>
      </div>
      <div className="my-[2px] flex w-[688px] shrink-0 items-center bg-[#f2f2f2] pl-[24px] pt-[2px] text-[32px] text-[#333]">
        <svg width="34" height="34" viewBox="0 0 34 34" className="mr-[22px]">
          <circle cx="21" cy="12" r="10" fill="none" stroke="#222" strokeWidth="2.2" />
          <path d="M14 20L2 33" stroke="#222" strokeWidth="2.2" />
        </svg>
        在这里输入你要搜索的内容
      </div>
      <div className="flex w-[94px] shrink-0 items-center justify-center">
        <div className="h-[30px] w-[30px] rounded-full border-[4px] border-white" />
      </div>
      <div className="flex w-[103px] shrink-0 items-center justify-center pr-[4px]">
        <svg width="32" height="32" viewBox="0 0 32 32">
          <path d="M2 6V2H24V6M2 26V30H24V26M2 11H23V21H2ZM28 4V8M28 24V28" stroke="#fff" strokeWidth="2" fill="none" />
          <circle cx="29" cy="16" r="2.5" fill="#fff" />
        </svg>
      </div>
      <div className="w-[98px] shrink-0"><TaskApp><ChromeIcon /></TaskApp></div>
      <div className="w-[98px] shrink-0"><TaskApp><FolderIcon /></TaskApp></div>
      <div className="w-[99px] shrink-0"><TaskApp><MailIcon /></TaskApp></div>
      <div className="w-[96px] shrink-0">
        <div className="relative flex h-full items-center justify-center bg-[#6e6e6e]">
          <VsColor />
          <div className="absolute bottom-0 left-0 right-0 h-[4px] bg-[#76b9ed]" />
        </div>
      </div>
      <svg width="20" height="46" viewBox="0 0 20 46" className="ml-[496px] self-center">
        <path d="M1 0H7V12H13V0H19V22C19 28 14 30 11 30V46H8V30C5 30 1 28 1 22Z" fill="#fff" />
      </svg>
      <div className="ml-[8px] flex h-[46px] w-[83px] items-center justify-center self-center border-[5px] border-white bg-[#1f9c50] text-[23px] font-light tracking-[-0.5px]">100%</div>
      <div className="h-[24px] w-[6px] self-center bg-white" />
      <svg width="26" height="16" viewBox="0 0 26 16" className="ml-[12px] self-center">
        <path d="M1 15L13 1L25 15" stroke="#fff" strokeWidth="1.6" fill="none" />
      </svg>
      <svg width="28" height="30" viewBox="0 0 28 30" className="ml-[21px] self-center">
        <path d="M2 29C2 18 10 7 26 2M8 29C8 22 14 13 26 9M14 29C14 25 18 19 25 16" stroke="#ddd" strokeWidth="1.6" fill="none" />
        <circle cx="21" cy="26" r="3.5" fill="#fff" />
      </svg>
      <svg width="32" height="30" viewBox="0 0 32 30" className="ml-[20px] self-center">
        <path d="M1 3V11M7 3V11M0 11H8V16C8 19 5 20 4 20V28" stroke="#fff" strokeWidth="2" fill="none" />
        <rect x="11" y="7" width="19" height="17" fill="none" stroke="#fff" strokeWidth="2" />
        <rect x="13" y="9" width="15" height="13" fill="#d8d8d8" />
      </svg>
      <svg width="30" height="30" viewBox="0 0 30 30" className="ml-[10px] self-center">
        <path d="M2 10H7L15 3V27L7 20H2Z" fill="none" stroke="#fff" strokeWidth="1.8" />
        <path d="M19 9C21 12 21 18 19 21M24 5C27 11 27 19 24 25" fill="none" stroke="#ddd" strokeWidth="1.5" />
      </svg>
      <span className="ml-[22px] self-center text-[28px]">英</span>
      <div className="ml-[28px] flex h-[30px] w-[30px] items-center justify-center self-center bg-white text-[26px] text-black">拼</div>
      <div className="ml-[25px] flex w-[140px] flex-col items-center justify-center self-center text-[24.5px] leading-[36px]">
        <span>12:48</span>
        <span>2020/11/24</span>
      </div>
      <div className="relative ml-[38px] w-[32px]">
        <svg width="32" height="30" viewBox="0 0 32 30" className="mt-[24px]">
          <path d="M0 0H32V24H12L6 30V24H0Z" fill="#fff" />
          <path d="M6 7H26M6 13H26M6 19H20" stroke="#484848" strokeWidth="2" />
        </svg>
        <div className="absolute left-[12px] top-[38px] flex h-[34px] w-[34px] items-center justify-center rounded-full border-2 border-[#bbb] bg-[#484848] text-[20px] font-bold">1</div>
      </div>
      <div className="ml-[21px] w-px bg-[#888]" />
    </div>
  );
}

export default function App() {
  return (
    <div className="relative flex h-[1600px] w-[2560px] flex-col overflow-hidden bg-[#eeeef2] font-['Open_Sans','Noto_Sans_CJK_SC',sans-serif] text-[24.4px] leading-[30px] text-[#1e1e1e]">
      <MenuBar />
      <ToolBar />
      <div className="h-[26px] shrink-0" />
      <div className="flex min-h-0 flex-1 pl-[13px]">
        <div className="flex w-[684px] shrink-0 flex-col">
          <div className="flex min-h-0 flex-1">
            <SolutionPanel />
          </div>
          <BottomTabs
            items={[
              ["Solution Exp...", "w-[187px] pl-[10px]", true],
              ["Class View", "w-[144px] pl-[13px]", false],
              ["Property Ma...", "w-[189px] pl-[13px]", false],
              ["Git Changes", "w-[162px] pl-[13px]", false],
            ]}
          />
          <div className="h-[13px] shrink-0" />
        </div>
        <div className="ml-[11px] flex min-w-0 flex-1 flex-col">
          <DocPanel />
          <OutputPanel />
          <BottomTabs
            items={[
              ["Output", "w-[106px] pl-[10px]", true],
              ["Error List", "w-[140px] pl-[13px]", false],
            ]}
          />
          <div className="h-[13px] shrink-0" />
        </div>
        <RightRail />
      </div>
      <StatusBar />
      <Taskbar />

      <div className="absolute left-[2287px] top-[2px] h-[18px] w-[98px] overflow-hidden rounded-full border-[3px] border-[#6e6e72] bg-white">
        <div className="m-[2px] h-[8px] w-[42px] rounded-full bg-[#f0792a]" />
      </div>
      <Dialog />
      <div className="absolute left-[2026px] top-[1437px] flex whitespace-nowrap text-[74px] leading-[100px] text-white [text-shadow:4px_5px_0_rgba(60,60,60,0.75)]">
        <span>知乎</span>
        <span className="ml-[36px] tracking-[1.5px]">@Lionel</span>
      </div>
    </div>
  );
}
